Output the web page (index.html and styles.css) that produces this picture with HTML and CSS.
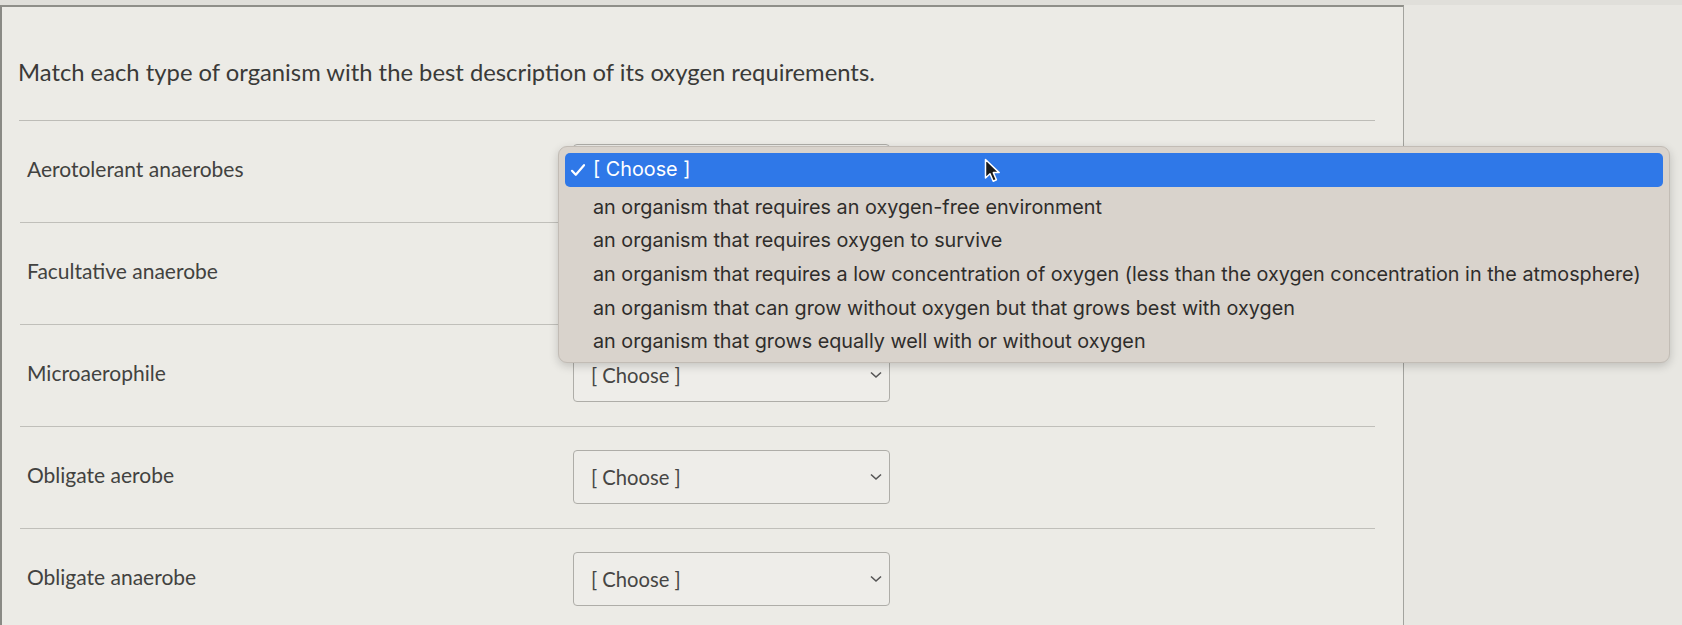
FILE: index.html
```html
<!DOCTYPE html>
<html>
<head>
<meta charset="utf-8">
<link rel="stylesheet" href="styles.css">
</head>
<body>
<div class="topstrip"></div>
<div class="card">
  <div class="question">Match each type of organism with the best description of its oxygen requirements.</div>
  <div class="qsep"></div>
  <div class="rows">
    <div class="row">
      <div class="label">Aerotolerant anaerobes</div>
      <div class="select covered"><span class="val">[ Choose ]</span><svg class="chev" viewBox="0 0 12 8" width="12" height="8"><path d="M1 1.5 L6 6 L11 1.5" fill="none" stroke="#555" stroke-width="1.6"/></svg></div>
    </div>
    <div class="row">
      <div class="label">Facultative anaerobe</div>
      <div class="select covered"><span class="val">[ Choose ]</span><svg class="chev" viewBox="0 0 12 8" width="12" height="8"><path d="M1 1.5 L6 6 L11 1.5" fill="none" stroke="#555" stroke-width="1.6"/></svg></div>
    </div>
    <div class="row">
      <div class="label">Microaerophile</div>
      <div class="select"><span class="val">[ Choose ]</span><svg class="chev" viewBox="0 0 12 8" width="12" height="8"><path d="M1 1.5 L6 6 L11 1.5" fill="none" stroke="#555" stroke-width="1.6"/></svg></div>
    </div>
    <div class="row">
      <div class="label">Obligate aerobe</div>
      <div class="select"><span class="val">[ Choose ]</span><svg class="chev" viewBox="0 0 12 8" width="12" height="8"><path d="M1 1.5 L6 6 L11 1.5" fill="none" stroke="#555" stroke-width="1.6"/></svg></div>
    </div>
    <div class="row">
      <div class="label">Obligate anaerobe</div>
      <div class="select"><span class="val">[ Choose ]</span><svg class="chev" viewBox="0 0 12 8" width="12" height="8"><path d="M1 1.5 L6 6 L11 1.5" fill="none" stroke="#555" stroke-width="1.6"/></svg></div>
    </div>
  </div>
</div>

<div class="menu">
  <div class="opt selected"><svg class="check" viewBox="0 0 16 14" width="16" height="14"><path d="M2 7.8 L5.8 11.8 L14 2.2" fill="none" stroke="#ffffff" stroke-width="2.2" stroke-linecap="round" stroke-linejoin="round"/></svg>[ Choose ]</div>
  <div class="opt">an organism that requires an oxygen-free environment</div>
  <div class="opt">an organism that requires oxygen to survive</div>
  <div class="opt">an organism that requires a low concentration of oxygen (less than the oxygen concentration in the atmosphere)</div>
  <div class="opt">an organism that can grow without oxygen but that grows best with oxygen</div>
  <div class="opt">an organism that grows equally well with or without oxygen</div>
</div>

<svg class="cursor" width="18" height="26" viewBox="0 0 18 26">
  <path d="M1.5 1.5 L1.5 20 L6 15.8 L9.2 23.2 L12.4 21.8 L9.3 14.6 L15.2 14.6 Z" fill="#1a1a1a" stroke="#ffffff" stroke-width="1.5" stroke-linejoin="round"/>
</svg>
</body>
</html>
```

FILE: styles.css
```css
html, body {
  margin: 0;
  padding: 0;
}
body {
  background: #e8e7e2;
  width: 1682px;
  height: 625px;
  overflow: hidden;
  position: relative;
  font-family: Lato, "Liberation Sans", sans-serif;
  color: #3c3c3a;
}
.topstrip {
  height: 5px;
  background: #e0dfda;
}
.card {
  width: 1404px;
  height: 640px;
  background: #ecebe6;
  border-top: 2px solid #8f8f89;
  border-left: 2px solid #8a8a85;
  border-right: 1px solid #a3a39e;
  box-sizing: border-box;
}
.question {
  font-size: 23.8px;
  padding: 51px 0 0 16px;
  height: 62px;
  line-height: 28px;
  color: #3a3a38;
}
.qsep {
  margin: 0 28px 0 17px;
  border-top: 1px solid #bdbcb7;
}
.rows {
  display: flex;
  flex-direction: column;
}
.row {
  display: grid;
  grid-template-columns: 546px 317px;
  align-items: center;
  height: 102px;
  box-sizing: border-box;
  padding: 0 0 0 7px;
  margin: 0 28px 0 18px;
  border-bottom: 1px solid #c0bfba;
}
.row .label {
  font-size: 21px;
  margin-top: -6px;
  color: #424240;
}
.row .select {
  box-sizing: border-box;
  height: 54px;
  margin-top: -2px;
  border: 1.5px solid #aeada8;
  border-radius: 4px;
  background: #eeede9;
  display: flex;
  align-items: center;
  justify-content: space-between;
  padding: 0 7px 0 17px;
  font-size: 20.2px;
  color: #464644;
}
.select.covered .val {
  visibility: hidden;
}
.menu {
  position: absolute;
  left: 558px;
  top: 146px;
  width: 1112px;
  height: 217px;
  box-sizing: border-box;
  padding: 6px 6px;
  background: #d9d3cc;
  border: 1px solid #c2bcb5;
  border-radius: 9px;
  box-shadow: 0 3px 10px rgba(0,0,0,0.18);
  font-family: Inter, "Open Sans", sans-serif;
  font-size: 19.8px;
  color: #2f2d2b;
}
.opt {
  height: 33.7px;
  line-height: 33.7px;
  padding-left: 28px;
  white-space: nowrap;
  position: relative;
}
.opt.selected {
  background: #2f78e8;
  color: #ffffff;
  border-radius: 5px;
  margin-bottom: 4px;
}
.check {
  position: absolute;
  left: 5px;
  top: 10px;
}
.cursor {
  position: absolute;
  left: 984px;
  top: 158px;
}
```
